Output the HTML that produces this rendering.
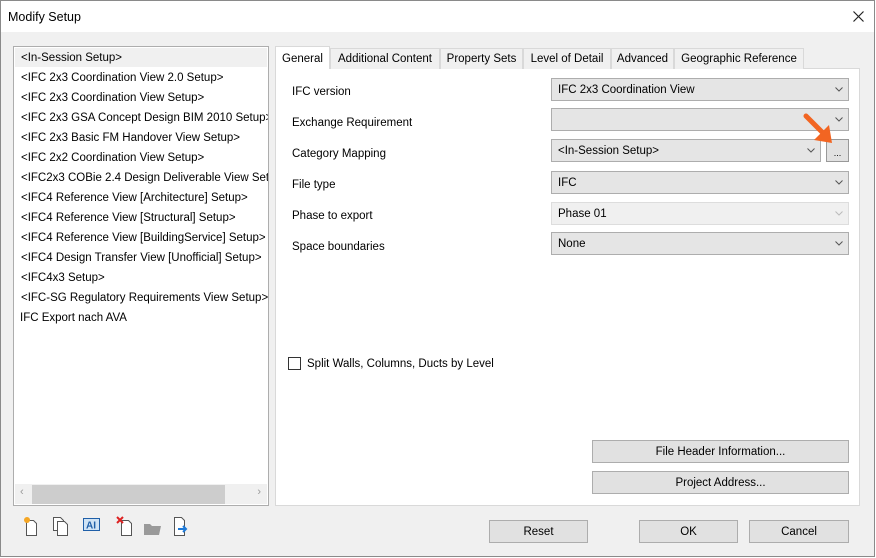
<!DOCTYPE html>
<html><head><meta charset="utf-8"><style>
*{box-sizing:border-box;margin:0;padding:0}
body{width:876px;height:558px;background:#fff;font-family:"Liberation Sans",sans-serif;font-size:11.5px;color:#000;position:relative;overflow:hidden}
.win{position:absolute;left:0;top:0;width:875px;height:557px;border:1px solid #8a8a8a;background:#f0f0f0}
.title{position:absolute;left:0;top:0;width:873px;height:31px;background:#fff}
.title span{position:absolute;left:7px;top:9px;font-size:12.5px}
.a{position:absolute}
.list{left:12px;top:45px;width:256px;height:460px;background:#fff;border:1px solid #adadad}
.list div{height:20px;line-height:22px;padding-left:7px;white-space:nowrap;overflow:hidden}
.list .sel{background:#f0f0f0;margin:1px 1px 0 1px;height:19px;padding-left:6px;line-height:21px}
.sb{left:1px;bottom:1px;width:252px;height:17px;background:#f0f0f0}
.thumb{left:17px;top:1px;width:193px;height:15px;background:#cdcdcd}
.panel{left:274px;top:67px;width:585px;height:438px;background:#fff;border:1px solid #d9d9d9}
.tab{top:47px;height:21px;border:1px solid #d9d9d9;border-bottom:none;background:#f0f0f0;line-height:21px;text-align:center;white-space:nowrap}
.lbl{left:291px}
.dd{left:550px;width:298px;height:23px;border:1px solid #adadad;background:#e5e5e5;line-height:23px;padding-left:6px}
.dd svg{position:absolute;right:5px;top:8px}
.btn{border:1px solid #adadad;background:#e1e1e1;text-align:center;line-height:23px;height:23px}
</style></head><body>
<div class="win">
<div class="title"><span>Modify Setup</span>
<svg class="a" style="left:852px;top:10px" width="11" height="11"><path d="M0.5 0.5l10 10M10.5 0.5l-10 10" stroke="#222" stroke-width="1.2"/></svg></div>
<div class="a list">
<div class="sel">&lt;In-Session Setup&gt;</div>
<div>&lt;IFC 2x3 Coordination View 2.0 Setup&gt;</div>
<div>&lt;IFC 2x3 Coordination View Setup&gt;</div>
<div>&lt;IFC 2x3 GSA Concept Design BIM 2010 Setup&gt;</div>
<div>&lt;IFC 2x3 Basic FM Handover View Setup&gt;</div>
<div>&lt;IFC 2x2 Coordination View Setup&gt;</div>
<div>&lt;IFC2x3 COBie 2.4 Design Deliverable View Setup&gt;</div>
<div>&lt;IFC4 Reference View [Architecture] Setup&gt;</div>
<div>&lt;IFC4 Reference View [Structural] Setup&gt;</div>
<div>&lt;IFC4 Reference View [BuildingService] Setup&gt;</div>
<div>&lt;IFC4 Design Transfer View [Unofficial] Setup&gt;</div>
<div>&lt;IFC4x3 Setup&gt;</div>
<div>&lt;IFC-SG Regulatory Requirements View Setup&gt;</div>
<div style="padding-left:6px">IFC Export nach AVA</div>
<div class="a sb"><div class="a thumb"></div><span class="a" style="left:5px;top:0;color:#999;font-size:11px;line-height:17px">‹</span><span class="a" style="right:6px;top:0;color:#999;font-size:11px;line-height:17px">›</span></div>
</div>
<div class="a panel"></div>
<div class="a tab" style="left:274px;width:55px;top:45px;height:23px;background:#fff;line-height:24px">General</div>
<div class="a tab" style="left:329px;width:110px">Additional Content</div>
<div class="a tab" style="left:439px;width:83px">Property Sets</div>
<div class="a tab" style="left:522px;width:88px">Level of Detail</div>
<div class="a tab" style="left:610px;width:63px">Advanced</div>
<div class="a tab" style="left:673px;width:130px">Geographic Reference</div>

<div class="a lbl" style="top:85px">IFC version</div>
<div class="a lbl" style="top:116px">Exchange Requirement</div>
<div class="a lbl" style="top:147px">Category Mapping</div>
<div class="a lbl" style="top:178px">File type</div>
<div class="a lbl" style="top:209px">Phase to export</div>
<div class="a lbl" style="top:240px">Space boundaries</div>

<div class="a dd" style="top:77px">IFC 2x3 Coordination View<svg width="8" height="5"><path d="M0.5 0.5l3.5 3.5 3.5-3.5" stroke="#555" fill="none"/></svg></div>
<div class="a dd" style="top:107px"><svg width="8" height="5"><path d="M0.5 0.5l3.5 3.5 3.5-3.5" stroke="#555" fill="none"/></svg></div>
<div class="a dd" style="top:138px;width:270px">&lt;In-Session Setup&gt;<svg width="8" height="5"><path d="M0.5 0.5l3.5 3.5 3.5-3.5" stroke="#555" fill="none"/></svg></div>
<div class="a btn" style="left:825px;top:138px;width:23px;border-color:#999;font-size:9px;line-height:26px">...</div>
<div class="a dd" style="top:170px">IFC<svg width="8" height="5"><path d="M0.5 0.5l3.5 3.5 3.5-3.5" stroke="#555" fill="none"/></svg></div>
<div class="a dd" style="top:201px;background:#f0f0f0;border-color:#ddd">Phase 01<svg width="8" height="5"><path d="M0.5 0.5l3.5 3.5 3.5-3.5" stroke="#bbb" fill="none"/></svg></div>
<div class="a dd" style="top:231px">None<svg width="8" height="5"><path d="M0.5 0.5l3.5 3.5 3.5-3.5" stroke="#555" fill="none"/></svg></div>

<svg class="a" style="left:799px;top:109px" width="36" height="36"><line x1="6" y1="6" x2="24" y2="24" stroke="#f26522" stroke-width="5" stroke-linecap="round"/><polygon points="32,33 14,30 29,15" fill="#f26522"/></svg>

<div class="a" style="left:287px;top:356px;width:13px;height:13px;border:1px solid #333;background:#fff"></div>
<div class="a" style="left:306px;top:357px">Split Walls, Columns, Ducts by Level</div>

<div class="a btn" style="left:591px;top:439px;width:257px">File Header Information...</div>
<div class="a btn" style="left:591px;top:470px;width:257px">Project Address...</div>
<div class="a btn" style="left:488px;top:519px;width:99px">Reset</div>
<div class="a btn" style="left:638px;top:519px;width:99px">OK</div>
<div class="a btn" style="left:748px;top:519px;width:100px">Cancel</div>

<svg class="a" style="left:21px;top:514px" width="175" height="22">
<g fill="#fff" stroke="#555" stroke-width="1">
<path d="M4.5 5.5h7l3 3v12h-10z"/>
<path d="M31.5 2.5h7l3 3v10h-10z"/><path d="M35.5 6.5h7l3 3v11h-10z"/>
<path d="M99.5 5.5h7l3 3v12h-10z"/>
<path d="M152.5 2.5h7l3 3v15h-10z"/>
</g>
<circle cx="5" cy="5" r="3" fill="#f5a623"/>
<rect x="61.5" y="3.5" width="16" height="12" fill="#cfe3f5" stroke="#1f5fa8"/>
<text x="64" y="13.5" font-size="10" font-weight="bold" fill="#1f5fa8" font-family="Liberation Sans">AI</text>
<path d="M95 2l6 6M101 2l-6 6" stroke="#d22" stroke-width="2"/>
<path d="M122 9h6l2 2h9l-2 9h-15z" fill="#9a9a9a"/>
<path d="M156 14h8M161 11l3 3-3 3" stroke="#1e7ad8" stroke-width="2" fill="none"/>
</svg>
</div>
</body></html>
